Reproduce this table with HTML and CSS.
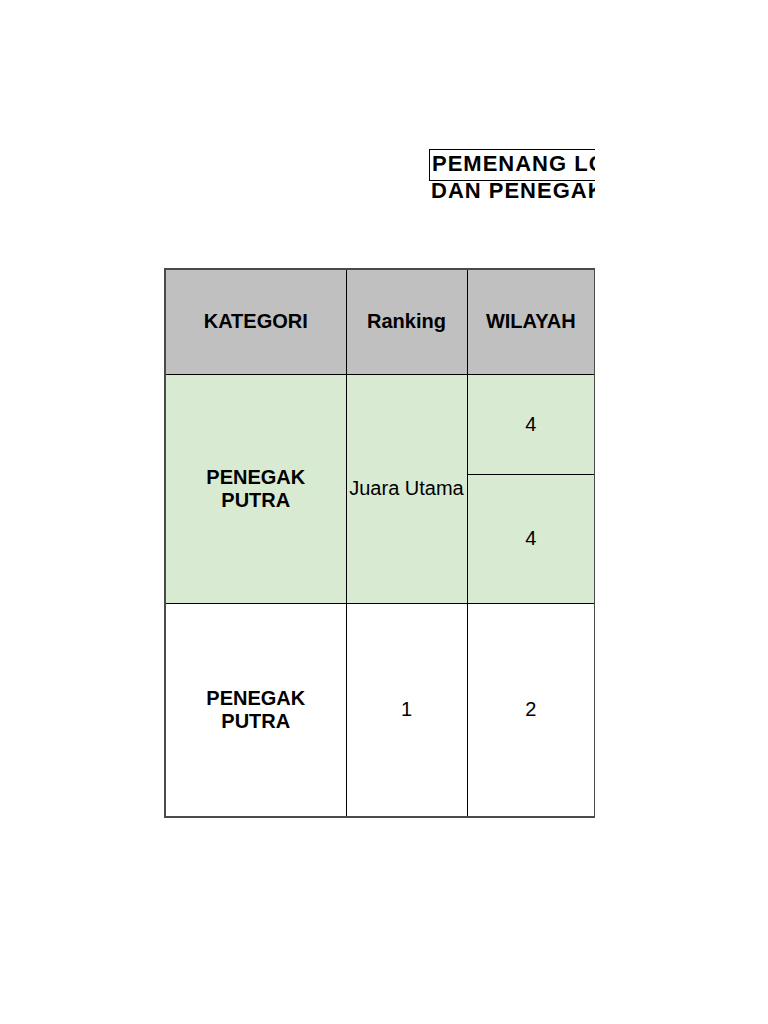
FILE: index.html
```html
<!DOCTYPE html>
<html>
<head>
<meta charset="utf-8">
<link rel="stylesheet" href="styles.css">
</head>
<body>
<div class="page">
  <div class="title">
    <div class="t1">PEMENANG LOMBA PENGGALANG</div>
    <div class="t2">DAN PENEGAK KWARTIR</div>
  </div>
  <table class="grid">
    <colgroup>
      <col class="c1">
      <col class="c2">
      <col class="c3">
    </colgroup>
    <tr class="r-head">
      <th>KATEGORI</th>
      <th>Ranking</th>
      <th>WILAYAH</th>
    </tr>
    <tr class="r-a green">
      <td rowspan="2" class="cat">PENEGAK<br>PUTRA</td>
      <td rowspan="2">Juara Utama</td>
      <td>4</td>
    </tr>
    <tr class="r-b green">
      <td>4</td>
    </tr>
    <tr class="r-c">
      <td class="cat">PENEGAK<br>PUTRA</td>
      <td>1</td>
      <td>2</td>
    </tr>
  </table>
</div>
</body>
</html>
```
FILE: styles.css
```css
html, body {
  margin: 0;
  padding: 0;
  background: #fff;
}
body {
  font-family: "Liberation Sans", Arial, sans-serif;
  color: #000;
}
.page {
  width: 595px;
  height: 1024px;
  overflow: hidden;
  padding-top: 149px;
  box-sizing: border-box;
}
.title {
  margin-left: 429px;
  font-size: 22px;
  font-weight: bold;
  letter-spacing: 1px;
  white-space: nowrap;
}
.t1 {
  border: 1px solid #000;
  border-right: none;
  height: 30px;
  line-height: 28px;
  padding-left: 2px;
  width: 300px;
}
.t2 {
  line-height: 20px;
  padding-left: 2px;
}
.grid {
  margin-top: 67px;
  margin-left: 164px;
  border-collapse: collapse;
  border: 2px solid #4a4a4a;
  table-layout: fixed;
  width: 430px;
}
.c1 { width: 181px; }
.c2 { width: 121px; }
.c3 { width: 128px; }
.grid th, .grid td {
  border: 1px solid #000;
  text-align: center;
  vertical-align: middle;
  padding: 0;
  font-size: 20px;
  line-height: 23px;
}
.grid th {
  font-weight: bold;
  background: #c0c0c0;
}
.r-head { height: 105px; }
.r-a { height: 100px; }
.r-b { height: 129px; }
.r-c { height: 214px; }
.green td { background: #d9ead3; }
.grid td.cat {
  font-weight: bold;
}
```
